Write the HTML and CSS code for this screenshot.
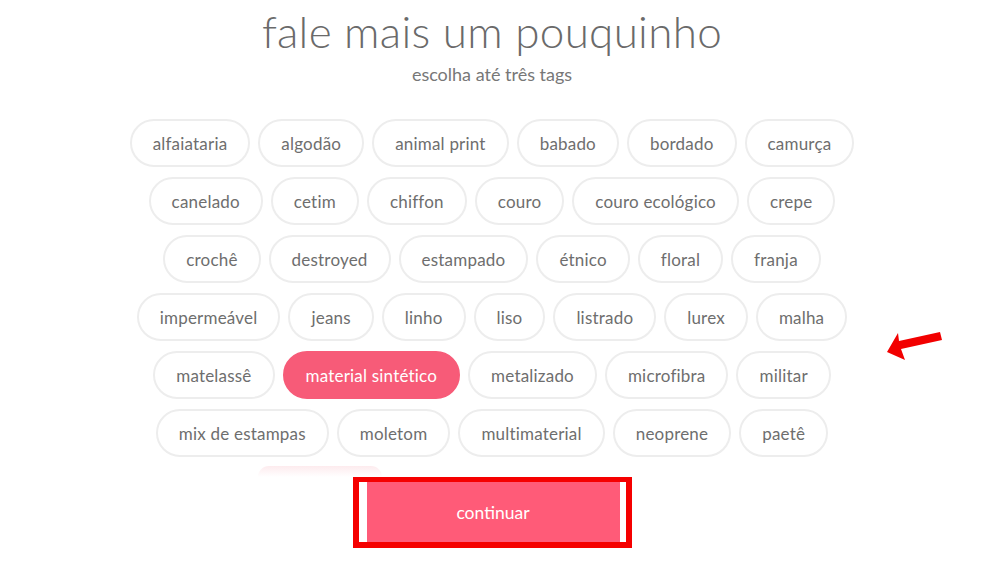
FILE: index.html
```html
<!doctype html>
<html>

<head>
    <title>fale mais um pouquinho</title>
    <link rel="stylesheet" href="styles.css">
</head>

<body>
    <div class="page">
        <h1 class="title">fale mais um pouquinho</h1>
        <p class="subtitle">escolha até três tags</p>

        <div class="tags">
            <div class="row">
                <span class="tag">alfaiataria</span>
                <span class="tag">algodão</span>
                <span class="tag">animal print</span>
                <span class="tag">babado</span>
                <span class="tag">bordado</span>
                <span class="tag">camurça</span>
            </div>
            <div class="row">
                <span class="tag">canelado</span>
                <span class="tag">cetim</span>
                <span class="tag">chiffon</span>
                <span class="tag">couro</span>
                <span class="tag">couro ecológico</span>
                <span class="tag">crepe</span>
            </div>
            <div class="row">
                <span class="tag">crochê</span>
                <span class="tag">destroyed</span>
                <span class="tag">estampado</span>
                <span class="tag">étnico</span>
                <span class="tag">floral</span>
                <span class="tag">franja</span>
            </div>
            <div class="row">
                <span class="tag">impermeável</span>
                <span class="tag">jeans</span>
                <span class="tag">linho</span>
                <span class="tag">liso</span>
                <span class="tag">listrado</span>
                <span class="tag">lurex</span>
                <span class="tag">malha</span>
            </div>
            <div class="row">
                <span class="tag">matelassê</span>
                <span class="tag selected">material sintético</span>
                <span class="tag">metalizado</span>
                <span class="tag">microfibra</span>
                <span class="tag">militar</span>
            </div>
            <div class="row">
                <span class="tag">mix de estampas</span>
                <span class="tag">moletom</span>
                <span class="tag">multimaterial</span>
                <span class="tag">neoprene</span>
                <span class="tag">paetê</span>
            </div>
        </div>

        <div class="fade-row">
            <div class="fade-tag"></div>
        </div>

        <div class="highlight">
            <button class="continue">continuar</button>
        </div>
    </div>

    <svg class="arrow" width="64" height="36" viewBox="0 0 64 36">
        <polygon points="2,22 13,3 14,11 55,2 57,10 16,19 20,30" fill="#f20000" />
    </svg>
</body>

</html>
```

FILE: styles.css
```css
html,
body {
    margin: 0;
    padding: 0;
    width: 100%;
    height: 100%;
    overflow: hidden;
    background: #fff;
}

* {
    box-sizing: border-box;
}

body {
    font-family: Lato, "Open Sans", sans-serif;
    color: #666;
}

.page {
    width: 984px;
    display: flex;
    flex-direction: column;
    align-items: center;
}

.title {
    margin: 5px 0 0;
    font-size: 44px;
    font-weight: 300;
    color: #6a6a6a;
    line-height: 52px;
    letter-spacing: 0.3px;
}

.subtitle {
    margin: 7px 0 0;
    font-size: 18px;
    color: #777;
    line-height: 20px;
}

.tags {
    margin-top: 35px;
    display: flex;
    flex-direction: column;
    align-items: center;
    gap: 10px;
}

.row {
    display: flex;
    justify-content: center;
    gap: 8px;
}

.tag {
    height: 48px;
    padding: 0 21px;
    border: 2px solid #ededed;
    border-radius: 24px;
    display: flex;
    align-items: center;
    font-size: 17px;
    letter-spacing: 0.2px;
    color: #6e6e6e;
    white-space: nowrap;
}

.tag.selected {
    background: #f75b78;
    border-color: #f75b78;
    color: #fff;
}

.fade-row {
    width: 100%;
    height: 20px;
    padding-top: 9px;
}

.fade-tag {
    margin-left: 258px;
    width: 124px;
    height: 11px;
    border-radius: 14px 14px 0 0;
    background: linear-gradient(#fdebee, #ffffff);
}

.highlight {
    border: 6px solid #f50000;
    border-top-width: 5px;
    padding: 0 6px 0 8px;
    width: 279px;
    height: 71px;
}

.continue {
    width: 100%;
    height: 100%;
    border: 0;
    background: #ff5b78;
    color: #fff;
    font-family: inherit;
    font-size: 17.5px;
}

.arrow {
    position: absolute;
    left: 885px;
    top: 330px;
}
```
